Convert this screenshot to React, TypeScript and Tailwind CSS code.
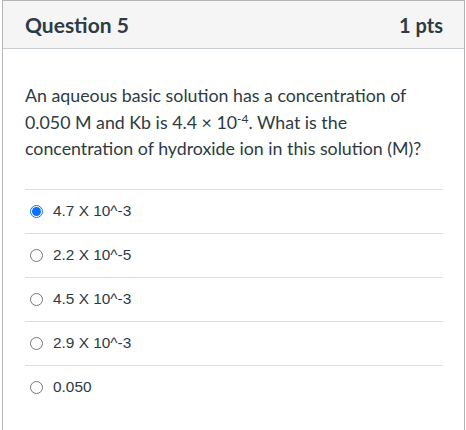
import React from 'react';

const options = [
  { label: '4.7 X 10^-3', checked: true },
  { label: '2.2 X 10^-5', checked: false },
  { label: '4.5 X 10^-3', checked: false },
  { label: '2.9 X 10^-3', checked: false },
  { label: '0.050', checked: false },
];

function Radio({ checked }: { checked: boolean }) {
  if (checked) {
    return (
      <span className="w-[13px] h-[13px] rounded-full border border-[#0b74ff] flex items-center justify-center shrink-0">
        <span className="w-[9px] h-[9px] rounded-full bg-[#0b6fff]" />
      </span>
    );
  }
  return <span className="w-[13px] h-[13px] rounded-full border border-[#767676] bg-white shrink-0" />;
}

export default function App() {
  return (
    <div className="w-[466px] h-[430px] bg-white overflow-hidden">
      <div className="ml-[2px] w-[463px] h-[440px] border border-[#b5b5b5] border-b-0">
        <div className="h-[48px] bg-[#f5f5f5] border-b border-[#c7cdd1] flex items-center justify-between pl-[22px] pr-[21px] font-['Lato',sans-serif] text-[#2d3b45]">
          <span className="text-[21px] font-bold">Question 5</span>
          <span className="text-[20px] font-bold">1 pts</span>
        </div>
        <div className="px-[22px] pt-[33px]">
          <p className="font-['Lato',sans-serif] text-[17.8px] leading-[26.5px] text-[#2d3b45]">
            An aqueous basic solution has a concentration of 0.050 M and Kb is 4.4 × 10
            <sup className="text-[12px] leading-none">-4</sup>. What is the concentration of hydroxide ion in this solution (M)?
          </p>
          <div className="mt-[27px] mr-[-1px]">
            {options.map((o) => (
              <div
                key={o.label}
                className="h-[44px] border-t border-[#dcdcdc] flex items-center pl-[5px] gap-[10px] font-['Liberation_Sans',Arial,sans-serif] text-[15.4px] text-[#2d3b45]"
              >
                <Radio checked={o.checked} />
                <span>{o.label}</span>
              </div>
            ))}
          </div>
        </div>
      </div>
    </div>
  );
}
